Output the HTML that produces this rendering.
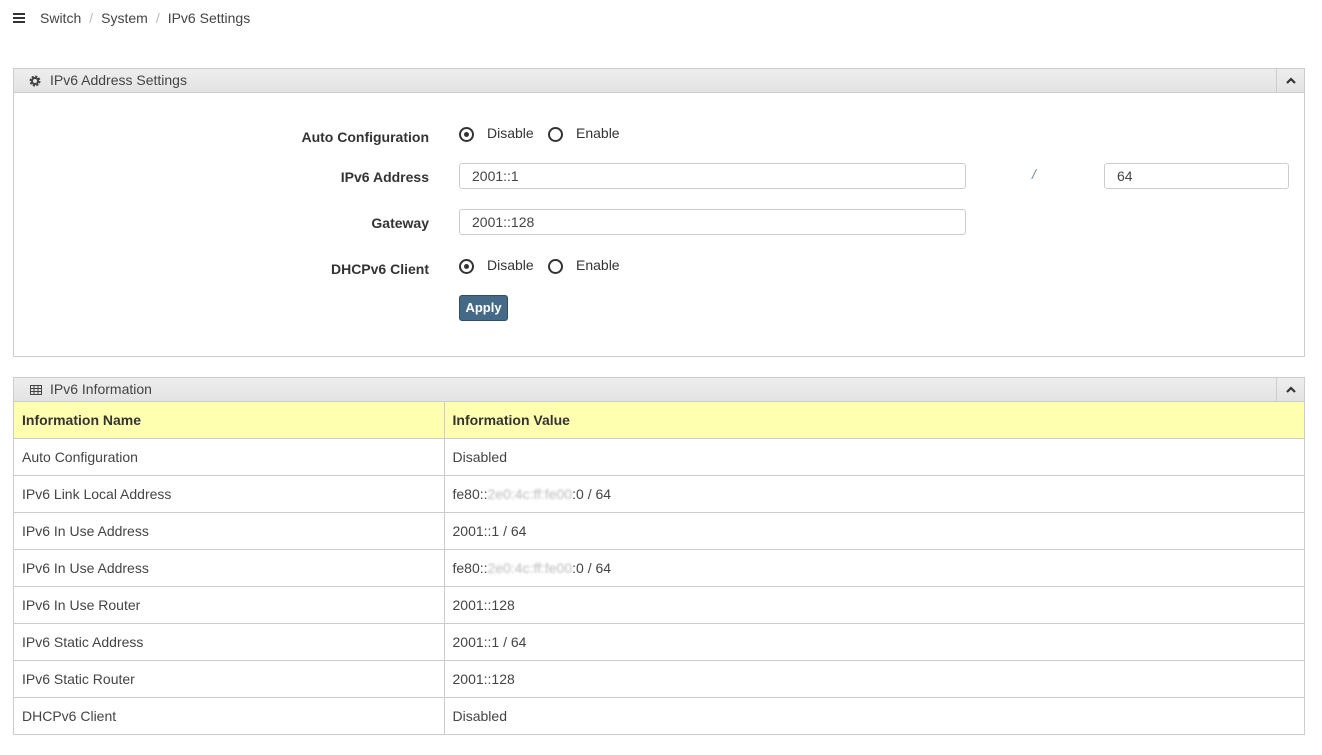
<!DOCTYPE html>
<html><head><style>
*{box-sizing:border-box}
body{margin:0;width:1322px;height:755px;background:#fff;font-family:"Liberation Sans",sans-serif;font-size:14px;color:#333;position:relative;overflow:hidden}
.abs{position:absolute}
.bc{top:10px;left:40px;font-size:14px;color:#444}
.bc .s{color:#bbb;margin:0 8px}
.panel{position:absolute;left:13px;width:1292px;border:1px solid #ccc}
.ph{height:24px;background:linear-gradient(#eee,#e3e3e3);border-bottom:1px solid #ccc;position:relative;font-size:14px;color:#444;line-height:23px;padding-left:36px}
.ph .btn{position:absolute;right:0;top:0;width:28px;height:23px;border-left:1px solid #ccc;text-align:center}
.lbl{font-weight:bold;text-align:right;width:200px;left:229px;font-size:14px;color:#333}
.inp{height:26px;border:1px solid #ccc;border-radius:3px;padding-left:12px;line-height:24px;font-size:14px;color:#444}
.radio{width:15px;height:15px;border:2px solid #333;border-radius:50%}
.radio.on::after{content:"";position:absolute;left:3px;top:3px;width:5px;height:5px;border-radius:50%;background:#333}
table{border-collapse:collapse;width:100%}
td{height:37px;border-top:1px solid #ccc;padding:0 8px;font-size:14px;color:#444}
td:first-child{width:430px;border-right:1px solid #ccc}
tr.h td{background:#ffffb0;font-weight:bold;color:#333;border-top:none;height:36px}
.bl{color:#bbb;filter:blur(1px)}
</style></head><body>
<div class="abs" style="left:13px;top:13px;width:12px;height:2px;background:#333;box-shadow:0 4px 0 #333,0 8px 0 #333"></div>
<div class="abs bc">Switch<span class="s">/</span>System<span class="s">/</span>IPv6 Settings</div>

<div class="panel" style="top:68px;height:289px">
<div class="ph"><svg class="abs" style="left:15px;top:6px" width="12" height="12" viewBox="0 0 12 12"><circle cx="6" cy="6" r="4.2" fill="none" stroke="#444" stroke-width="2.6" stroke-dasharray="2 1.3"/><circle cx="6" cy="6" r="3" fill="none" stroke="#444" stroke-width="2"/></svg>IPv6 Address Settings<div class="btn"><svg width="10" height="8" viewBox="0 0 10 8" style="margin-top:8px"><path d="M1 6L5 2L9 6" fill="none" stroke="#333" stroke-width="2.2"/></svg></div></div>
</div>
<div class="abs lbl" style="top:129px">Auto Configuration</div>
<div class="abs radio on" style="left:459px;top:127px"></div><div class="abs" style="left:487px;top:125px">Disable</div>
<div class="abs radio" style="left:548px;top:127px"></div><div class="abs" style="left:576px;top:125px">Enable</div>
<div class="abs lbl" style="top:169px">IPv6 Address</div>
<div class="abs inp" style="left:459px;top:163px;width:507px">2001::1</div>
<div class="abs" style="left:1032px;top:166px;color:#6a86a8;font-style:italic">/</div>
<div class="abs inp" style="left:1104px;top:163px;width:185px">64</div>
<div class="abs lbl" style="top:215px">Gateway</div>
<div class="abs inp" style="left:459px;top:209px;width:507px">2001::128</div>
<div class="abs lbl" style="top:261px">DHCPv6 Client</div>
<div class="abs radio on" style="left:459px;top:259px"></div><div class="abs" style="left:487px;top:257px">Disable</div>
<div class="abs radio" style="left:548px;top:259px"></div><div class="abs" style="left:576px;top:257px">Enable</div>
<div class="abs" style="left:459px;top:295px;width:49px;height:26px;background:#456a87;border:1px solid #2f4d66;border-radius:3px;color:#fff;font-weight:bold;font-size:13px;text-align:center;line-height:24px">Apply</div>

<div class="panel" style="top:377px;height:358px">
<div class="ph"><svg class="abs" style="left:16px;top:7px" width="12" height="10" viewBox="0 0 12 10"><path d="M0.5 0.5H11.5V9.5H0.5ZM0.5 3.5H11.5M0.5 6.5H11.5M4 0.5V9.5M8 0.5V9.5" fill="none" stroke="#444" stroke-width="1"/></svg>IPv6 Information<div class="btn"><svg width="10" height="8" viewBox="0 0 10 8" style="margin-top:8px"><path d="M1 6L5 2L9 6" fill="none" stroke="#333" stroke-width="2.2"/></svg></div></div>
<table>
<tr class="h"><td>Information Name</td><td>Information Value</td></tr>
<tr><td>Auto Configuration</td><td>Disabled</td></tr>
<tr><td>IPv6 Link Local Address</td><td>fe80::<span class="bl">2e0:4c:ff:fe00</span>:0 / 64</td></tr>
<tr><td>IPv6 In Use Address</td><td>2001::1 / 64</td></tr>
<tr><td>IPv6 In Use Address</td><td>fe80::<span class="bl">2e0:4c:ff:fe00</span>:0 / 64</td></tr>
<tr><td>IPv6 In Use Router</td><td>2001::128</td></tr>
<tr><td>IPv6 Static Address</td><td>2001::1 / 64</td></tr>
<tr><td>IPv6 Static Router</td><td>2001::128</td></tr>
<tr><td>DHCPv6 Client</td><td>Disabled</td></tr>
</table>
</div>
</body></html>
